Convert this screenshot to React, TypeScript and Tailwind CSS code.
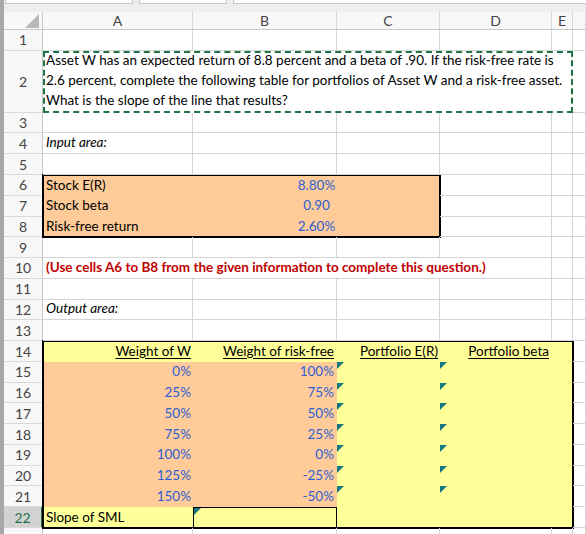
import React from "react";

const columns = [
  { label: "A", width: "w-[150px]" },
  { label: "B", width: "w-[144px]" },
  { label: "C", width: "w-[103px]" },
  { label: "D", width: "w-[112px]" },
  { label: "E", width: "w-[21px]" },
  { label: "", width: "flex-1" },
];

const weights = [
  ["0%", "100%"],
  ["25%", "75%"],
  ["50%", "50%"],
  ["75%", "25%"],
  ["100%", "0%"],
  ["125%", "-25%"],
  ["150%", "-50%"],
];

const inputs = [
  ["Stock E(R)", "8.80%"],
  ["Stock beta", "0.90"],
  ["Risk-free return", "2.60%"],
];

const rowNumbers = Array.from({ length: 23 }, (_, i) => i + 1);

function Flag() {
  return (
    <span className="absolute left-0 top-0 h-0 w-0 border-t-[7px] border-r-[7px] border-t-[#18787f] border-r-transparent" />
  );
}

function RowHeader({ n }: { n: number }) {
  const height = n === 1 ? "h-[20.7px]" : n === 2 ? "h-[62px]" : "h-[20.77px]";
  const selected = n === 22;
  return (
    <div
      className={`${height} flex shrink-0 items-center justify-center border-b border-[#d9d9d9] ${
        selected
          ? "bg-[#d2d2d2] text-[#217346] border-r-2 border-r-[#217346]"
          : "bg-[#f8f8f8] text-[#444] border-r border-r-[#c8c8c8]"
      }`}
    >
      {n < 23 ? n : ""}
    </div>
  );
}

export default function App() {
  return (
    <div className="flex h-[534px] w-[586px] overflow-hidden bg-white text-[13.5px] text-black font-['Lato',sans-serif]">
      <div className="w-[4px] shrink-0 bg-[#a8a8a8]" />

      <div className="flex min-w-0 flex-1 flex-col">
        {/* formula bar remnants */}
        <div className="flex h-[12px] shrink-0 gap-[6px] bg-[#eeeeee] pl-[1px]">
          <div className="h-[4px] w-[128px] border border-t-0 border-[#c6c6c6] bg-white" />
          <div className="h-[4px] w-[88px] border border-t-0 border-[#c6c6c6] bg-white" />
          <div className="h-[4px] flex-1 border border-t-0 border-r-0 border-[#c6c6c6] bg-white" />
        </div>

        {/* column headers */}
        <div className="flex h-[18px] shrink-0 border-b border-[#c8c8c8] bg-[#f8f8f8] text-[14px] text-[#444]">
          <div className="flex w-[39px] items-end justify-end border-r border-[#c8c8c8] pb-[1px] pr-[3px]">
            <span className="h-0 w-0 border-b-[14px] border-l-[14px] border-b-[#b8b8b8] border-l-transparent" />
          </div>
          {columns.map((c, i) => (
            <div
              key={i}
              className={`${c.width} flex items-center justify-center border-r border-[#d9d9d9] leading-none`}
            >
              {c.label}
            </div>
          ))}
        </div>

        <div className="flex shrink-0">
          {/* row headers */}
          <div className="flex w-[39px] shrink-0 flex-col text-[14px]">
            {rowNumbers.map((n) => (
              <RowHeader key={n} n={n} />
            ))}
          </div>

          {/* sheet body */}
          <div className="grid flex-1 grid-cols-[150px_144px_103px_112px_21px_1fr] grid-rows-[20.7px_62px_repeat(21,20.77px)] auto-rows-[20.77px]">
            {/* A2:E2 problem text */}
            <div className="col-start-1 col-end-6 row-start-2 flex flex-col justify-end border-2 border-dashed border-[#217346] pb-[1px] pl-[1px] leading-[20px] whitespace-nowrap">
              <span>Asset W has an expected return of 8.8 percent and a beta of .90. If the risk-free rate is</span>
              <span>2.6 percent, complete the following table for portfolios of Asset W and a risk-free asset.</span>
              <span>What is the slope of the line that results?</span>
            </div>

            <div className="col-start-1 row-start-4 flex items-end border-b border-r border-[#d4d4d4] pb-[1px] pl-[3px] italic">
              Input area:
            </div>

            {/* input block */}
            <div className="col-start-1 col-end-4 row-start-6 row-end-9 grid grid-cols-[150px_1fr] grid-rows-3 bg-[#ffcc99] outline-2 outline-black -outline-offset-1">
              {inputs.map(([label, value]) => (
                <React.Fragment key={label}>
                  <div className="flex items-end pb-[1px] pl-[3px]">{label}</div>
                  <div className="flex items-end justify-center pb-[1px] text-[#2d5fd3]">{value}</div>
                </React.Fragment>
              ))}
            </div>

            <div className="col-start-1 col-end-5 row-start-10 flex items-end whitespace-nowrap border-b border-r border-[#d4d4d4] pb-[1px] pl-[3px] font-bold text-[#c00000]">
              (Use cells A6 to B8 from the given information to complete this question.)
            </div>

            <div className="col-start-1 row-start-12 flex items-end border-b border-r border-[#d4d4d4] pb-[1px] pl-[3px] italic">
              Output area:
            </div>

            {/* output block */}
            <div className="col-start-1 col-end-6 row-start-14 row-end-23 grid grid-cols-[150px_144px_103px_112px_1fr] grid-rows-9 bg-[#ffff99] outline-2 outline-black -outline-offset-1">
              <div className="flex items-end justify-end pb-[1px] pr-[2px]">
                <span className="underline underline-offset-2">Weight of W</span>
              </div>
              <div className="flex items-end justify-end pb-[1px] pr-[3px]">
                <span className="underline underline-offset-2">Weight of risk-free</span>
              </div>
              <div className="flex items-end justify-end pb-[1px] pr-[2px]">
                <span className="underline underline-offset-2">Portfolio E(R)</span>
              </div>
              <div className="flex items-end justify-end pb-[1px] pr-[3px]">
                <span className="underline underline-offset-2">Portfolio beta</span>
              </div>
              <div />

              {weights.map(([w, rf]) => (
                <React.Fragment key={w}>
                  <div className="flex items-end justify-end bg-[#ffcc99] pb-[1px] pr-[2px] text-[#2d5fd3]">{w}</div>
                  <div className="flex items-end justify-end bg-[#ffcc99] pb-[1px] pr-[3px] text-[#2d5fd3]">{rf}</div>
                  <div className="relative">
                    <Flag />
                  </div>
                  <div className="relative">
                    <Flag />
                  </div>
                  <div />
                </React.Fragment>
              ))}

              <div className="flex items-end pb-[1px] pl-[3px]">Slope of SML</div>
              <div className="relative border border-black">
                <Flag />
              </div>
              <div />
              <div />
              <div />
            </div>

            {/* remaining empty cells with gridlines */}
            {Array.from({ length: 79 }, (_, i) => (
              <div key={i} className="border-b border-r border-[#d4d4d4]" />
            ))}
          </div>
        </div>
      </div>
    </div>
  );
}
